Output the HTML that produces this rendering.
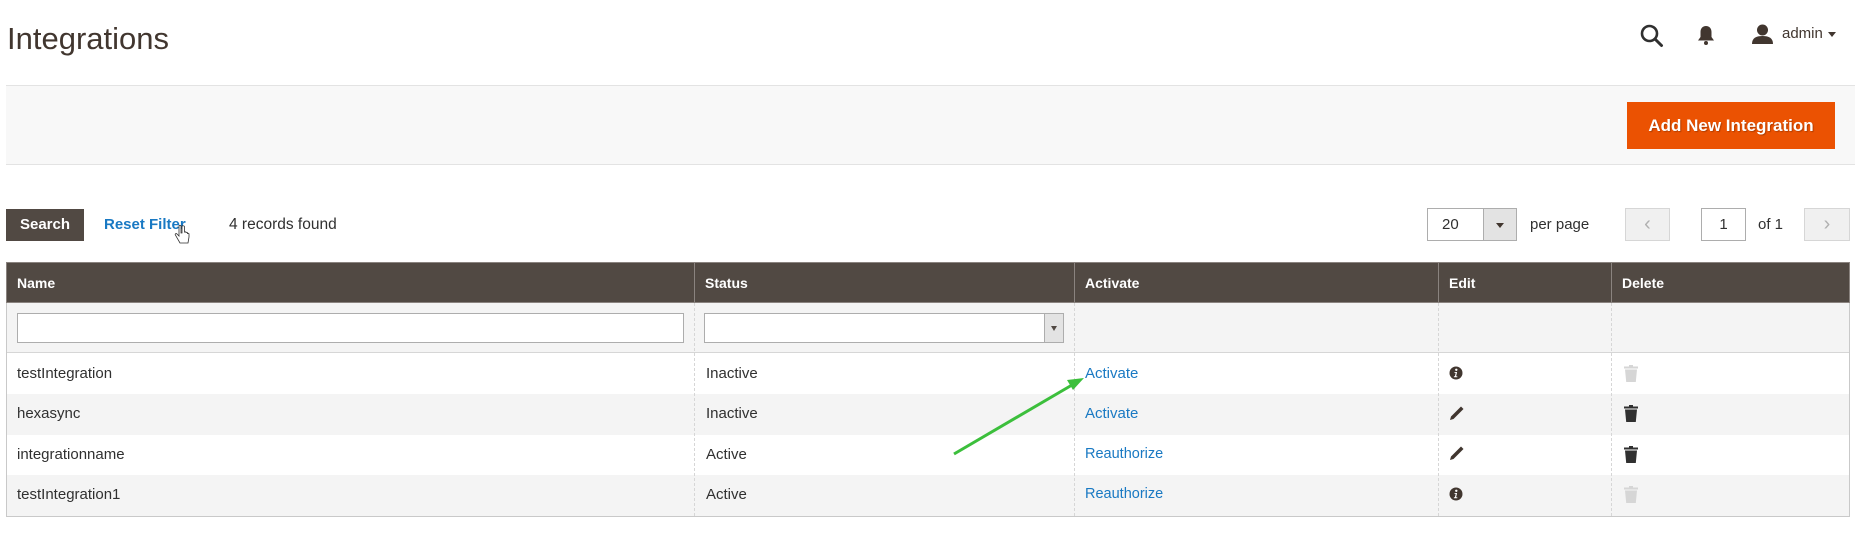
<!DOCTYPE html>
<html><head><meta charset="utf-8"><style>
*{box-sizing:border-box;margin:0;padding:0}
body{width:1855px;height:544px;background:#fff;font-family:"Liberation Sans",sans-serif;color:#303030;position:relative;overflow:hidden}
.a{position:absolute}
.t{font-size:15px;color:#303030;white-space:nowrap}
.lnk{color:#1979c3}
.th{font-size:14px;font-weight:bold;color:#fff}
.vd{position:absolute;width:0;border-left:1px dashed #d6d6d6}
</style></head><body>
<div class="a" style="left:7px;top:21px;font-size:31px;color:#41362f">Integrations</div>
<svg class="a" style="left:1640px;top:24px" width="24" height="24" viewBox="0 0 24 24"><circle cx="9.5" cy="9.5" r="7.5" fill="none" stroke="#303030" stroke-width="2.6"/><line x1="15" y1="15" x2="21.5" y2="21.5" stroke="#303030" stroke-width="3" stroke-linecap="round"/></svg>
<svg class="a" style="left:1697px;top:25px" width="18" height="21" viewBox="0 0 18 21"><path d="M9 1c-3.5 0-5.5 2.5-5.5 6v5L1 15.5h16L14.5 12V7C14.5 3.5 12.5 1 9 1z" fill="#41362f"/><circle cx="9" cy="18" r="2" fill="#41362f"/></svg>
<svg class="a" style="left:1752px;top:24px" width="21" height="20" viewBox="0 0 21 20"><circle cx="10.5" cy="6" r="5.5" fill="#41362f"/><path d="M0 20c0-6 4-8 10.5-8S21 14 21 20z" fill="#41362f"/></svg>
<div class="a t" style="left:1782px;top:25px;font-size:15px;color:#41362f">admin</div>
<div class="a" style="left:1828px;top:32px;border-left:4px solid transparent;border-right:4px solid transparent;border-top:5px solid #41362f"></div>
<div class="a" style="left:6px;top:85px;width:1849px;height:80px;background:#f8f8f8;border-top:1px solid #e3e3e3;border-bottom:1px solid #e3e3e3"></div>
<div class="a" style="left:1627px;top:102px;width:208px;height:47px;background:#eb5202;color:#fff;font-weight:bold;font-size:17px;line-height:47px;text-align:center;text-shadow:1px 1px 1px rgba(0,0,0,.25)">Add New Integration</div>
<div class="a" style="left:6px;top:209px;width:78px;height:32px;background:#514943;color:#fff;font-weight:bold;font-size:15px;line-height:32px;text-align:center">Search</div>
<div class="a t lnk" style="left:104px;top:216px;font-size:15px;font-weight:bold">Reset Filter</div>
<div class="a t" style="left:229px;top:216px;font-size:15.5px">4 records found</div>
<div class="a" style="left:1427px;top:208px;width:90px;height:33px;border:1px solid #adadad;background:#fff"></div>
<div class="a" style="left:1483px;top:208px;width:34px;height:33px;border:1px solid #adadad;background:#e3e3e3"></div>
<div class="a" style="left:1496px;top:223px;border-left:4px solid transparent;border-right:4px solid transparent;border-top:5px solid #41362f"></div>
<div class="a t" style="left:1442px;top:216px;font-size:15px">20</div>
<div class="a t" style="left:1530px;top:216px;font-size:15px">per page</div>
<div class="a" style="left:1625px;top:208px;width:45px;height:33px;border:1px solid #d6d6d6;background:#f0f0f0;color:#b0b0b0;font-size:20px;text-align:center;line-height:31px">&#8249;</div>
<div class="a" style="left:1701px;top:208px;width:45px;height:33px;border:1px solid #adadad;background:#fff;text-align:center;line-height:31px;font-size:15px">1</div>
<div class="a t" style="left:1758px;top:216px;font-size:15px">of 1</div>
<div class="a" style="left:1804px;top:208px;width:46px;height:33px;border:1px solid #d6d6d6;background:#f0f0f0;color:#b0b0b0;font-size:20px;text-align:center;line-height:31px">&#8250;</div>
<div class="a" style="left:6px;top:262px;width:1844px;height:255px;border:1px solid #c9c9c9;border-top:none"></div>
<div class="a" style="left:6px;top:262px;width:1844px;height:41px;background:#514943;border:1px solid #8a837f"></div>
<div class="a" style="left:694px;top:262px;width:1px;height:41px;background:#8a837f"></div>
<div class="a" style="left:1074px;top:262px;width:1px;height:41px;background:#8a837f"></div>
<div class="a" style="left:1438px;top:262px;width:1px;height:41px;background:#8a837f"></div>
<div class="a" style="left:1611px;top:262px;width:1px;height:41px;background:#8a837f"></div>
<div class="a th" style="left:17px;top:275px">Name</div>
<div class="a th" style="left:705px;top:275px">Status</div>
<div class="a th" style="left:1085px;top:275px">Activate</div>
<div class="a th" style="left:1449px;top:275px">Edit</div>
<div class="a th" style="left:1622px;top:275px">Delete</div>
<div class="a" style="left:7px;top:303px;width:1842px;height:50px;background:#f4f4f4;border-bottom:1px solid #d6d6d6"></div>
<div class="a" style="left:17px;top:313px;width:667px;height:30px;background:#fff;border:1px solid #adadad"></div>
<div class="a" style="left:704px;top:313px;width:360px;height:30px;background:#fff;border:1px solid #adadad"></div>
<div class="a" style="left:1044px;top:313px;width:20px;height:30px;background:#e3e3e3;border:1px solid #adadad"></div>
<div class="a" style="left:1051px;top:326px;border-left:3px solid transparent;border-right:3px solid transparent;border-top:5px solid #514943"></div>
<div class="a" style="left:7px;top:394px;width:1842px;height:41px;background:#f4f4f4"></div>
<div class="a" style="left:7px;top:475px;width:1842px;height:41px;background:#f4f4f4"></div>
<div class="vd" style="left:694px;top:303px;height:213px"></div>
<div class="vd" style="left:1074px;top:303px;height:213px"></div>
<div class="vd" style="left:1438px;top:303px;height:213px"></div>
<div class="vd" style="left:1611px;top:303px;height:213px"></div>
<div class="a t" style="left:17px;top:365px">testIntegration</div>
<div class="a t" style="left:17px;top:405px">hexasync</div>
<div class="a t" style="left:17px;top:446px">integrationname</div>
<div class="a t" style="left:17px;top:486px">testIntegration1</div>
<div class="a t" style="left:706px;top:365px">Inactive</div>
<div class="a t" style="left:706px;top:405px">Inactive</div>
<div class="a t" style="left:706px;top:446px">Active</div>
<div class="a t" style="left:706px;top:486px">Active</div>
<div class="a t lnk" style="left:1085px;top:365px">Activate</div>
<div class="a t lnk" style="left:1085px;top:405px">Activate</div>
<div class="a t lnk" style="left:1085px;top:446px;font-size:14.5px">Reauthorize</div>
<div class="a t lnk" style="left:1085px;top:486px;font-size:14.5px">Reauthorize</div>
<svg class="a" style="left:1449px;top:366px" width="14" height="14" viewBox="0 0 14 14"><circle cx="7" cy="7" r="6.5" fill="#41362f"/><circle cx="7.3" cy="3.8" r="1.2" fill="#fff"/><path d="M5.5 6h2.6l-1 4.3h1.2v.9H4.9v-.9h1l.8-3.4H5.5z" fill="#fff"/></svg>
<svg class="a" style="left:1449px;top:487px" width="14" height="14" viewBox="0 0 14 14"><circle cx="7" cy="7" r="6.5" fill="#41362f"/><circle cx="7.3" cy="3.8" r="1.2" fill="#fff"/><path d="M5.5 6h2.6l-1 4.3h1.2v.9H4.9v-.9h1l.8-3.4H5.5z" fill="#fff"/></svg>
<svg class="a" style="left:1449px;top:405px" width="16" height="16" viewBox="0 0 16 16"><path d="M1 15l1-3.5L12 1.5l2.5 2.5L4.5 14z" fill="#41362f"/></svg>
<svg class="a" style="left:1449px;top:445px" width="16" height="16" viewBox="0 0 16 16"><path d="M1 15l1-3.5L12 1.5l2.5 2.5L4.5 14z" fill="#41362f"/></svg>
<svg class="a" style="left:1624px;top:365px" width="14" height="17" viewBox="0 0 14 17"><path d="M5 0h4v1.5h5V3.5H0V1.5h5zM1 4.5h12l-1.2 12.5H2.2z" fill="#d6d6d6"/></svg>
<svg class="a" style="left:1624px;top:405px" width="14" height="17" viewBox="0 0 14 17"><path d="M5 0h4v1.5h5V3.5H0V1.5h5zM1 4.5h12l-1.2 12.5H2.2z" fill="#303030"/></svg>
<svg class="a" style="left:1624px;top:446px" width="14" height="17" viewBox="0 0 14 17"><path d="M5 0h4v1.5h5V3.5H0V1.5h5zM1 4.5h12l-1.2 12.5H2.2z" fill="#303030"/></svg>
<svg class="a" style="left:1624px;top:486px" width="14" height="17" viewBox="0 0 14 17"><path d="M5 0h4v1.5h5V3.5H0V1.5h5zM1 4.5h12l-1.2 12.5H2.2z" fill="#d6d6d6"/></svg>
<svg class="a" style="left:0;top:0" width="1855" height="544"><line x1="954" y1="454" x2="1072" y2="385" stroke="#3cbf3c" stroke-width="3"/><path d="M1084 378l-17 2 6 10z" fill="#3cbf3c"/></svg>
<svg class="a" style="left:174px;top:225px" width="16" height="20" viewBox="0 0 16 20"><path d="M5 1v10l-2-2c-1-1-2.5 0-1.5 1.2L6 18h8l1-6V9c0-1-1.5-1-1.5 0V8c0-1-1.5-1-1.5 0V7.5c0-1-1.5-1-1.5 0V1.5C10 .5 8 .5 8 1.5V8H7V1C7 0 5 0 5 1z" fill="#fff" stroke="#303030" stroke-width=".8"/></svg>
</body></html>
